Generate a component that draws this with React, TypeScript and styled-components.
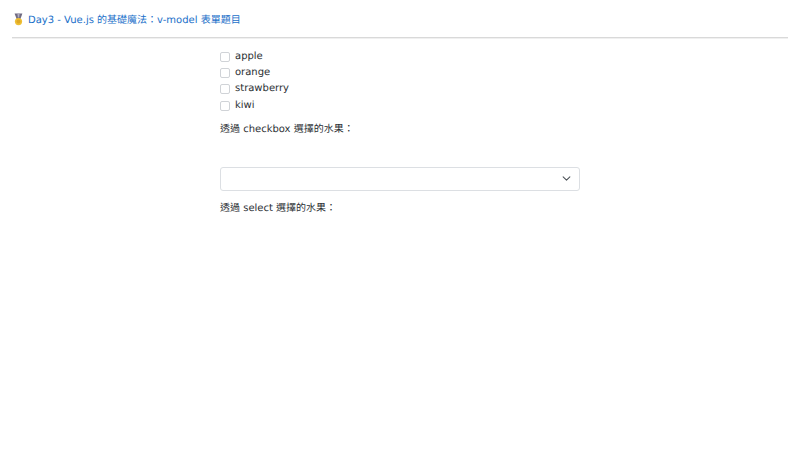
import React from "react";
import styled, { createGlobalStyle } from "styled-components";

const Global = createGlobalStyle`
  html, body { margin: 0; padding: 0; background: #fff; }
  body { font-family: "DejaVu Sans", "Noto Sans CJK TC", sans-serif; font-size: 10px; line-height: 16.2px; color: #2b2f33; text-rendering: geometricPrecision; }
`;
const Page = styled.div`
  width: 800px;
  height: 450px;
  padding: 0 12px;
  box-sizing: border-box;
  overflow: hidden;
`;
const Header = styled.header`
  height: 31px;
  padding-top: 6px;
  display: flex;
  align-items: center;
  gap: 4px;
  border-bottom: 1px solid #d9d9d9;
  box-shadow: 0 1px 0 #f0f0f0;
  box-sizing: content-box;
`;
const Title = styled.a`
  text-decoration: none;
  color: #1a6fc9;
`;
const Medal = styled.svg`
  width: 12px;
  height: 14px;
  flex: none;
  margin-bottom: 3px;
`;
const Main = styled.main`
  width: 360px;
  margin: 11px auto 0;
`;
const CheckRow = styled.label`
  display: flex;
  align-items: center;
  gap: 5px;
  height: 16.2px;
`;
const Box = styled.input.attrs({ type: "checkbox" })`
  appearance: none;
  width: 10px;
  height: 10px;
  margin: 0;
  border: 1px solid #d0d3d7;
  border-radius: 2px;
  background: #fff;
  box-sizing: border-box;
`;
const Result = styled.p<{ $top: number }>`
  margin: 0;
  margin-top: ${(p) => p.$top}px;
`;
const SelectWrap = styled.div`
  height: 24px;
  margin-top: 29px;
  border: 1px solid #dcdfe3;
  border-radius: 3px;
  box-sizing: border-box;
  display: flex;
  align-items: center;
  justify-content: flex-end;
  padding-right: 8px;
`;
const Chevron = styled.svg`
  width: 9px;
  height: 9px;
`;

export default function App() {
  return (
    <Page>
      <Global />
      <Header>
        <Medal viewBox="0 0 12 14">
          <path d="M2.6 0.5h7.8l-2 5.4h-3.8z" fill="#6f6a82" />
          <path d="M5.4 0.5h2.2l-.5 4h-1.2z" fill="#b3aec0" />
          <circle cx="6.5" cy="8.6" r="3.6" fill="#eebf35" />
          <circle cx="6.5" cy="8.6" r="2" fill="#dfa824" />
        </Medal>
        <Title>Day3 - Vue.js 的基礎魔法：v-model 表單題目</Title>
      </Header>
      <Main>
        {["apple", "orange", "strawberry", "kiwi"].map((f) => (
          <CheckRow key={f}>
            <Box />
            {f}
          </CheckRow>
        ))}
        <Result $top={8}>透過 checkbox 選擇的水果：</Result>
        <SelectWrap>
          <Chevron viewBox="0 0 16 16">
            <path d="M2 5l6 6 6-6" fill="none" stroke="#4a5056" strokeWidth="1.8" strokeLinecap="round" strokeLinejoin="round" />
          </Chevron>
        </SelectWrap>
        <Result $top={10}>透過 select 選擇的水果：</Result>
      </Main>
    </Page>
  );
}
